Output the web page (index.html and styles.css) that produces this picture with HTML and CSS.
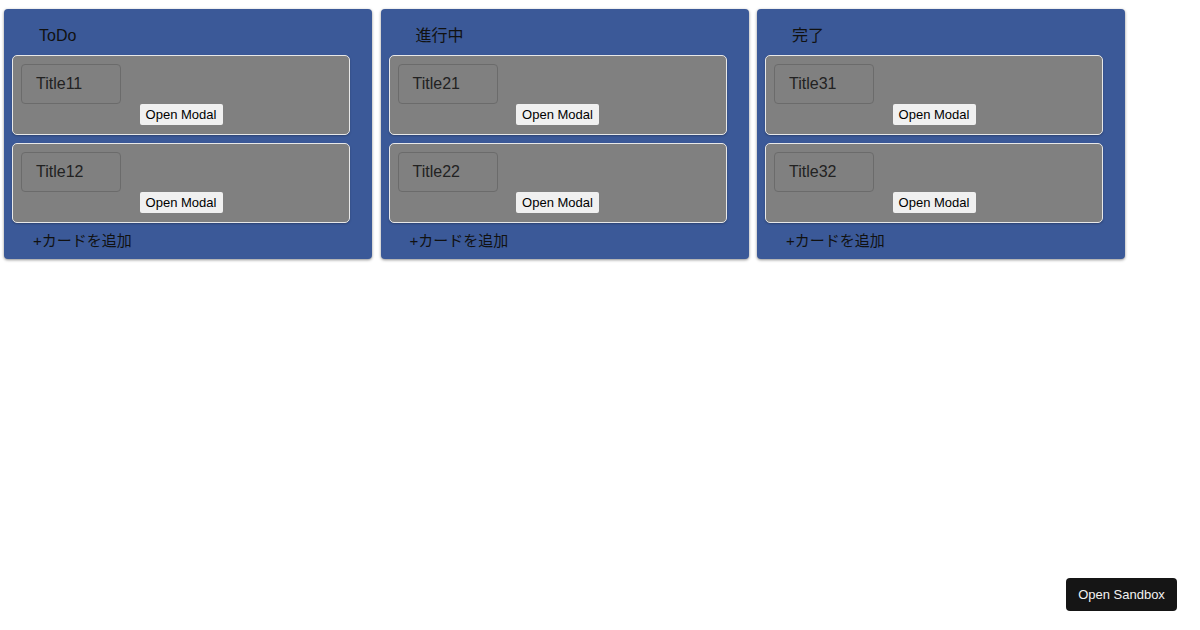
FILE: index.html
```html
<!DOCTYPE html>
<html lang="ja">
<head>
<meta charset="utf-8">
<title>Board</title>
<link rel="stylesheet" href="styles.css">
</head>
<body>
<div class="board">
  <section class="column">
    <div class="col-title">ToDo</div>
    <div class="card">
      <div class="card-title">Title11</div>
      <div class="card-actions"><button class="open-btn">Open Modal</button></div>
    </div>
    <div class="card">
      <div class="card-title">Title12</div>
      <div class="card-actions"><button class="open-btn">Open Modal</button></div>
    </div>
    <div class="add-card">+カードを追加</div>
  </section>
  <section class="column">
    <div class="col-title">進行中</div>
    <div class="card">
      <div class="card-title">Title21</div>
      <div class="card-actions"><button class="open-btn">Open Modal</button></div>
    </div>
    <div class="card">
      <div class="card-title">Title22</div>
      <div class="card-actions"><button class="open-btn">Open Modal</button></div>
    </div>
    <div class="add-card">+カードを追加</div>
  </section>
  <section class="column">
    <div class="col-title">完了</div>
    <div class="card">
      <div class="card-title">Title31</div>
      <div class="card-actions"><button class="open-btn">Open Modal</button></div>
    </div>
    <div class="card">
      <div class="card-title">Title32</div>
      <div class="card-actions"><button class="open-btn">Open Modal</button></div>
    </div>
    <div class="add-card">+カードを追加</div>
  </section>
</div>
<button class="sandbox-btn">Open Sandbox</button>
</body>
</html>
```
FILE: styles.css
```css
html, body {
  margin: 0;
  padding: 0;
  background: #ffffff;
}
body {
  font-family: "Liberation Sans", Arial, "Noto Sans CJK JP", sans-serif;
  color: #111;
}
.board {
  display: flex;
  align-items: flex-start;
  gap: 8.5px;
  padding: 9px 4px;
}
.column {
  width: 368px;
  box-sizing: border-box;
  background: #3b5998;
  border-radius: 4px;
  box-shadow: 0 1px 3px rgba(0, 0, 0, 0.45);
  padding: 18px 22px 9px 8px;
}
.col-title {
  font-size: 16px;
  line-height: 18px;
  padding-left: 27px;
  margin-bottom: 10px;
  color: #111;
}
.card {
  background: #808080;
  border: 1px solid #e8e8e8;
  border-radius: 5px;
  padding: 8px;
  margin-bottom: 8px;
  box-shadow: 0 1px 2px rgba(0, 0, 0, 0.25);
}
.card-title {
  width: 100px;
  height: 40px;
  box-sizing: border-box;
  border: 1px solid #6b6b6b;
  border-radius: 4px;
  padding-left: 14px;
  font-size: 16px;
  line-height: 38px;
  color: #222;
}
.card-actions {
  display: flex;
  justify-content: center;
  padding-bottom: 1px;
}
.open-btn {
  font-family: "Liberation Sans", Arial, sans-serif;
  font-size: 13px;
  line-height: 15px;
  padding: 3px 6px;
  width: 83px;
  height: 21px;
  border: none;
  border-radius: 2px;
  background: #f0f0f0;
  color: #000;
}
.add-card {
  font-size: 15px;
  line-height: 18px;
  margin-top: 9px;
  padding-left: 21px;
  color: #111;
}
.sandbox-btn {
  position: fixed;
  right: 23px;
  bottom: 19px;
  width: 111px;
  height: 33px;
  border: none;
  border-radius: 4px;
  background: #151515;
  color: #f2f2f2;
  font-family: "Liberation Sans", Arial, sans-serif;
  font-size: 13px;
}
```
